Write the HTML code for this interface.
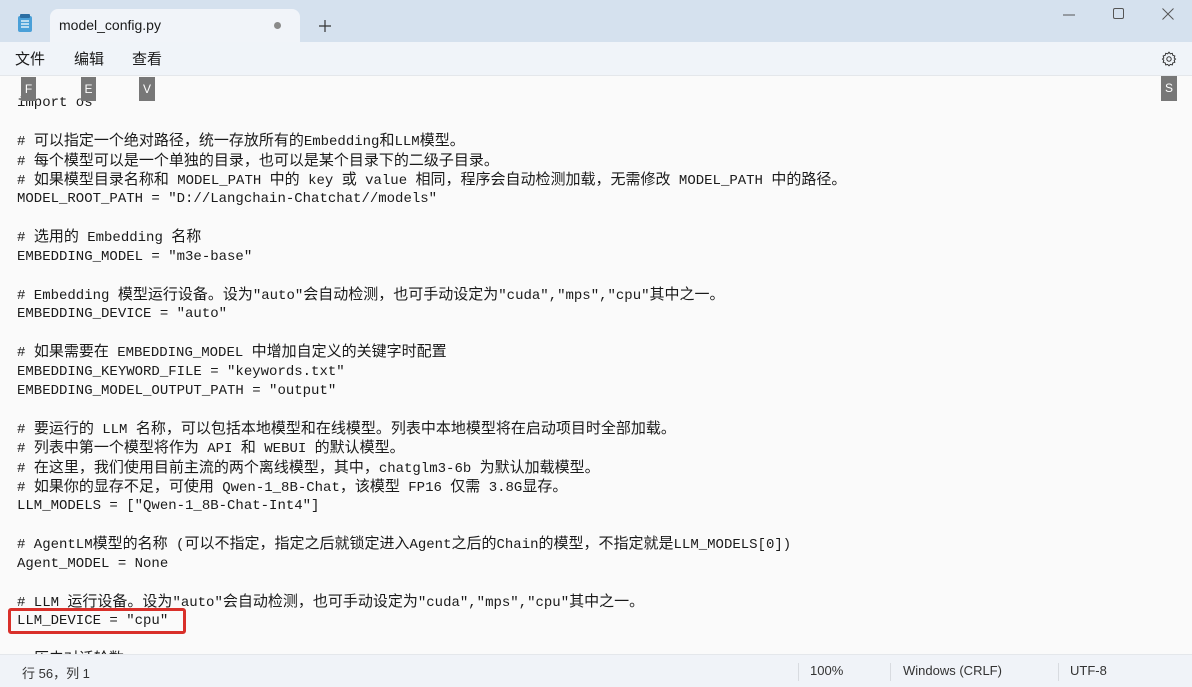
<!DOCTYPE html>
<html><head><meta charset="utf-8"><style>
*{margin:0;padding:0;box-sizing:border-box}
body{width:1192px;height:687px;overflow:hidden;background:#fafafa;font-family:"Liberation Sans","Noto Sans CJK SC",sans-serif;position:relative}
.title{position:absolute;left:0;top:0;width:1192px;height:42px;background:#d5e1ee}
.tab{position:absolute;left:50px;top:9px;width:250px;height:33px;background:#f1f4f9;border-radius:8px 8px 0 0}
.tab span{position:absolute;left:9px;top:8px;font-size:14px;color:#1a1a1a}
.dot{position:absolute;left:224px;top:13px;width:7px;height:7px;border-radius:50%;background:#8a8a8a}
.menu{position:absolute;left:0;top:42px;width:1192px;height:34px;background:#f0f4f9;border-bottom:1px solid #e4e7eb}
.menu span{position:absolute;top:6px;font-size:15px;color:#1a1a1a}
.key{position:absolute;background:#777;color:#fff;font-size:12px;width:15px;height:24px;text-align:center;line-height:24px}
.code{position:absolute;left:17px;top:94px;font-family:"Liberation Mono",monospace;font-size:14px;color:#1a1a1a}
.code div{height:19.2px;line-height:19.2px;white-space:pre;overflow:visible}
.c{font-family:"Noto Sans CJK SC",sans-serif;font-size:15px;letter-spacing:0;line-height:1}
.status{position:absolute;left:0;top:654px;width:1192px;height:33px;background:#f0f3f8;border-top:1px solid #e4e7eb;font-size:13px;color:#333}
.status span{position:absolute;top:8px}
.sep{position:absolute;top:8px;width:1px;height:18px;background:#d8dbe0}
.box{position:absolute;left:8px;top:608px;width:178px;height:26px;border:3px solid #d9302a;border-radius:3px}
</style></head><body>
<div class="code"><div>import os</div><div> </div><div># <span class="c">可以指定一个绝对路径，统一存放所有的</span>Embedding<span class="c">和</span>LLM<span class="c">模型。</span></div><div># <span class="c">每个模型可以是一个单独的目录，也可以是某个目录下的二级子目录。</span></div><div># <span class="c">如果模型目录名称和</span> MODEL_PATH <span class="c">中的</span> key <span class="c">或</span> value <span class="c">相同，程序会自动检测加载，无需修改</span> MODEL_PATH <span class="c">中的路径。</span></div><div>MODEL_ROOT_PATH = "D://Langchain-Chatchat//models"</div><div> </div><div># <span class="c">选用的</span> Embedding <span class="c">名称</span></div><div>EMBEDDING_MODEL = "m3e-base"</div><div> </div><div># Embedding <span class="c">模型运行设备。设为</span>"auto"<span class="c">会自动检测，也可手动设定为</span>"cuda","mps","cpu"<span class="c">其中之一。</span></div><div>EMBEDDING_DEVICE = "auto"</div><div> </div><div># <span class="c">如果需要在</span> EMBEDDING_MODEL <span class="c">中增加自定义的关键字时配置</span></div><div>EMBEDDING_KEYWORD_FILE = "keywords.txt"</div><div>EMBEDDING_MODEL_OUTPUT_PATH = "output"</div><div> </div><div># <span class="c">要运行的</span> LLM <span class="c">名称，可以包括本地模型和在线模型。列表中本地模型将在启动项目时全部加载。</span></div><div># <span class="c">列表中第一个模型将作为</span> API <span class="c">和</span> WEBUI <span class="c">的默认模型。</span></div><div># <span class="c">在这里，我们使用目前主流的两个离线模型，其中，</span>chatglm3-6b <span class="c">为默认加载模型。</span></div><div># <span class="c">如果你的显存不足，可使用</span> Qwen-1_8B-Chat<span class="c">，该模型</span> FP16 <span class="c">仅需</span> 3.8G<span class="c">显存。</span></div><div>LLM_MODELS = ["Qwen-1_8B-Chat-Int4"]</div><div> </div><div># AgentLM<span class="c">模型的名称</span> (<span class="c">可以不指定，指定之后就锁定进入</span>Agent<span class="c">之后的</span>Chain<span class="c">的模型，不指定就是</span>LLM_MODELS[0])</div><div>Agent_MODEL = None</div><div> </div><div># LLM <span class="c">运行设备。设为</span>"auto"<span class="c">会自动检测，也可手动设定为</span>"cuda","mps","cpu"<span class="c">其中之一。</span></div><div>LLM_DEVICE = "cpu"</div><div> </div><div># <span class="c">历史对话轮数</span></div></div>
<div class="title">
<svg style="position:absolute;left:17px;top:13px" width="16" height="20" viewBox="0 0 16 20"><rect x="1" y="3" width="14" height="16" rx="2" fill="#4aa0d8"/><rect x="3" y="1" width="10" height="4" rx="1" fill="#2b6ea3"/><path d="M4 8h8M4 11h8M4 14h8" stroke="#fff" stroke-width="1.3"/></svg>
<div class="tab"><span>model_config.py</span><div class="dot"></div></div>
<svg style="position:absolute;left:318px;top:19px" width="14" height="14"><path d="M7 1v12M1 7h12" stroke="#333" stroke-width="1.2"/></svg>
<svg style="position:absolute;left:1063px;top:14px" width="14" height="2"><path d="M0 1h12" stroke="#555"/></svg>
<svg style="position:absolute;left:1113px;top:8px" width="12" height="12"><rect x="0.5" y="0.5" width="10" height="10" rx="1.5" fill="none" stroke="#555"/></svg>
<svg style="position:absolute;left:1162px;top:8px" width="12" height="12"><path d="M0.5 0.5l11 11M11.5 0.5l-11 11" stroke="#555"/></svg>
</div>
<div class="menu"><span style="left:15px">文件</span><span style="left:74px">编辑</span><span style="left:132px">查看</span>
<svg style="position:absolute;left:1161px;top:9px" width="16" height="16" viewBox="0 0 16 16"><path d="M8 1.2l1.3 1.6 2-.5.5 2 2 .7-.6 2L14.5 8l-1.3 1.3.6 2-2 .6-.5 2-2-.5L8 14.8l-1.3-1.4-2 .5-.5-2-2-.6.6-2L1.5 8l1.3-1 -.6-2 2-.7.5-2 2 .5z" fill="none" stroke="#333" stroke-width="1"/><circle cx="8" cy="8" r="2.2" fill="none" stroke="#333"/></svg>
</div>
<div class="key" style="left:21px;top:77px">F</div>
<div class="key" style="left:81px;top:77px">E</div>
<div class="key" style="left:139px;top:77px;width:16px">V</div>
<div class="key" style="left:1161px;top:76px;width:16px;height:25px">S</div>
<div class="box"></div>
<div class="status"><span style="left:22px">行 56，列 1</span>
<div class="sep" style="left:798px"></div><span style="left:810px">100%</span>
<div class="sep" style="left:890px"></div><span style="left:903px">Windows (CRLF)</span>
<div class="sep" style="left:1058px"></div><span style="left:1070px">UTF-8</span></div>
</body></html>
